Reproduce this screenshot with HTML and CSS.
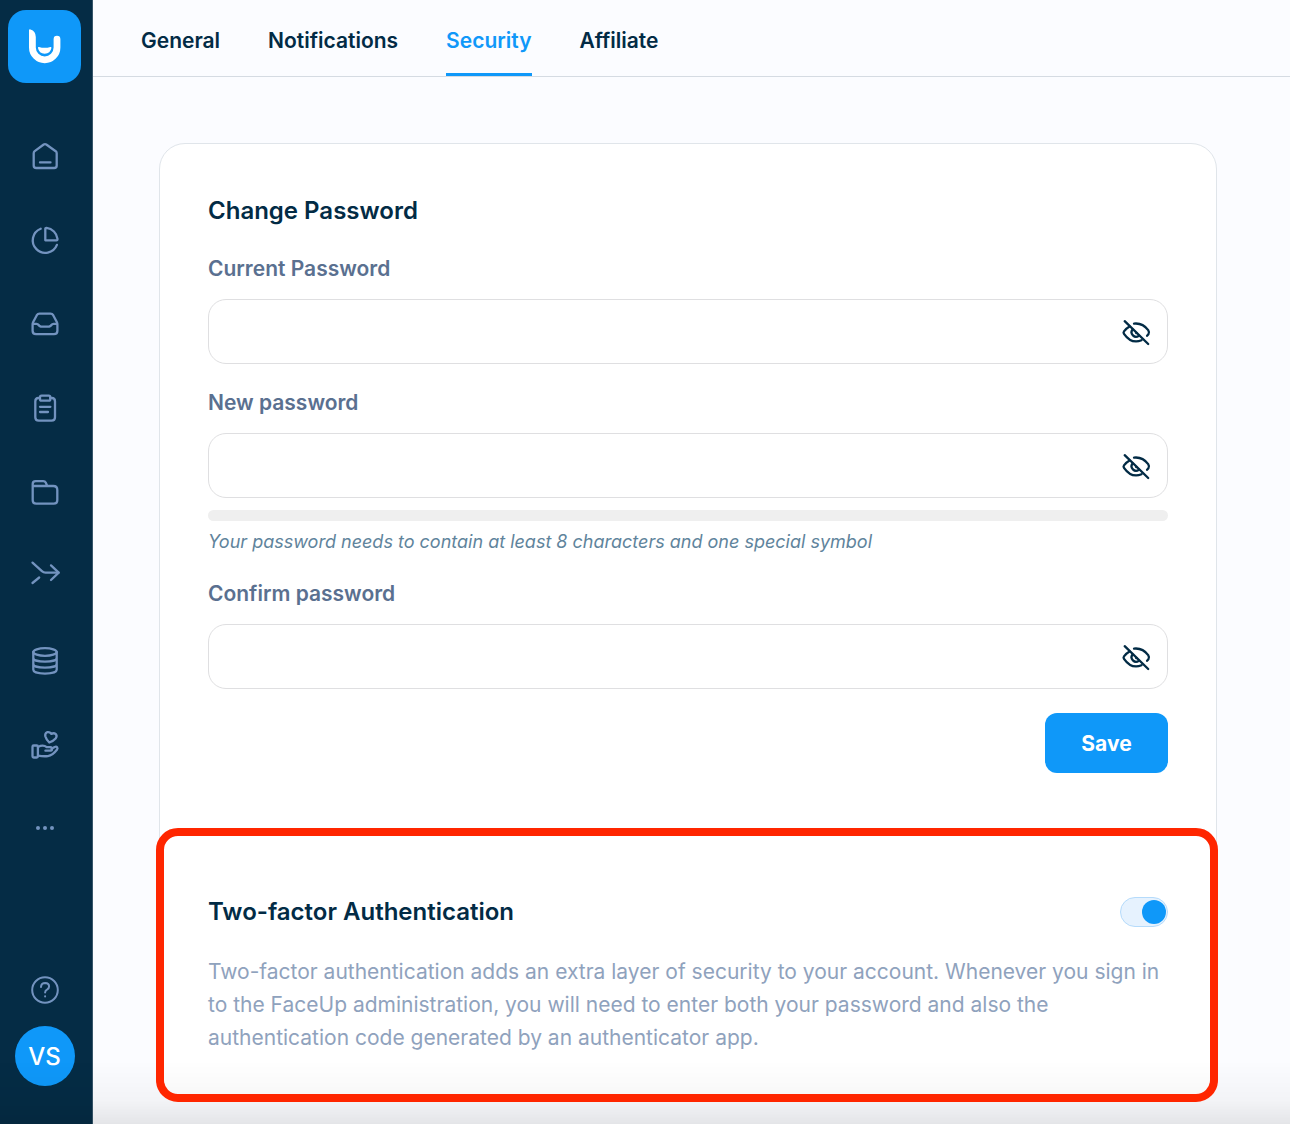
FILE: index.html
```html
<!DOCTYPE html>
<html lang="en">
<head>
    <meta charset="UTF-8">
    <meta name="viewport" content="width=device-width, initial-scale=1.0">
    <title>Settings - Security</title>
    <link rel="stylesheet" href="styles.css">
</head>
<body>
    <!-- Eye icon shared by the password fields -->
    <svg class="sprite" aria-hidden="true">
        <symbol id="eyeOff" viewBox="0 0 32 32">
            <path d="M4.7 5.2 28.2 28"/>
            <path d="M14 7.6c6-.7 10.800 2 14.200 6.500q1.500 2.200.2 4.200l-1.300 1.500"/>
            <path d="M9.500 10.500Q6.400 12.200 4 15.400q-.9 1.200 0 2.400c4.400 6.300 10.800 9.200 17.500 6.500"/>
            <path d="M12.500 13.500a4.500 4.500 0 0 0 6.300 6.300"/>
            <path d="M16.300 16.800v.4"/>
        </symbol>
    </svg>

    <aside class="sidebar">
        <a href="#" class="logo" aria-label="FaceUp">
            <svg viewBox="0 0 73 73">
                <path d="M21 20.500Q21 19 22.500 19.400 27.800 21 27.800 27v10.500a8.900 8.900 0 0 0 17.800 0v-8.300a3.400 3.400 0 0 1 6.800 0v8.300a15.700 15.700 0 0 1-31.400 0z"/>
                <path d="M31 37q5.700 1.700 11.400 0 1.200-.2 1 1a6.800 6.800 0 0 1-13.400 0q-.2-1.200 1-1z"/>
            </svg>
        </a>
        <nav class="side-nav" aria-label="Main">
            <a href="#" aria-label="Home">
                <svg viewBox="0 0 32 32">
                    <path d="M14.700 4.500q1.300-.9 2.600 0l9.400 6.700q1 .8 1 2v12.200q0 2.600-2.600 2.600H7.300q-2.600 0-2.600-2.600V13.200q0-1.200 1-2z"/>
                    <path d="M11 22.400h10.500"/>
                </svg>
            </a>
            <a href="#" aria-label="Reports">
                <svg viewBox="0 0 32 32">
                    <path d="M11.700 4.700a12.500 12.500 0 1 0 16.200 16.200"/>
                    <path d="M16.300 5q0-1.200 1.200-1.100a12.500 12.500 0 0 1 11 11q.1 1.400-1.100 1.400H16.300z"/>
                </svg>
            </a>
            <a href="#" aria-label="Inbox">
                <svg viewBox="0 0 32 32">
                    <path d="M10.500 5.700h11q1.800 0 2.700 1.500l3.600 6.800q.6 1.200.6 2.500v6.200q0 3.400-3.400 3.400H7q-3.400 0-3.400-3.400v-6.200q0-1.300.6-2.500l3.600-6.800q.9-1.500 2.700-1.500z"/>
                    <path d="M4 15.800h3.500q1.300 0 2.100 1.200t2.300 1.700h8.200q1.500-.5 2.300-1.700t2.100-1.200H28"/>
                </svg>
            </a>
            <a href="#" aria-label="Forms">
                <svg viewBox="0 0 32 32">
                    <path d="M11 6h-1.500Q6.300 6 6.300 9.500v15.700q0 3.500 3.500 3.500h12.700q3.500 0 3.500-3.500V9.500Q26 6 22.800 6h-1.500"/>
                    <rect x="11" y="3.700" width="10.300" height="5" rx="1.500"/>
                    <path d="M11 14.800h10.400M11 20h8"/>
                </svg>
            </a>
            <a href="#" aria-label="Files">
                <svg viewBox="0 0 32 32">
                    <path d="M3.700 10h20.600q4 0 4 4v10.200q0 3.500-3.500 3.500H7.200q-3.500 0-3.500-3.500V8q0-2.900 2.900-2.900h7.600q1.800 0 2.500 1.500l1.600 3.400"/>
                </svg>
            </a>
            <a href="#" aria-label="Workflows">
                <svg viewBox="0 0 32 32">
                    <path d="M3.500 2.600l9.400 8.600q1.600 1.500 3.600 1.500h13"/>
                    <path d="M22 5.400l7.700 7.300-7.700 7.300M3.500 23l6.700-5.500"/>
                </svg>
            </a>
            <a href="#" aria-label="Data">
                <svg viewBox="0 0 32 32">
                    <ellipse cx="16" cy="8" rx="11.700" ry="3.800"/>
                    <path d="M4.300 8v17.800c0 5 23.400 5 23.400 0V8M4.300 13.900c0 5 23.400 5 23.400 0M4.300 19.900c0 5 23.400 5 23.400 0"/>
                </svg>
            </a>
            <a href="#" aria-label="Care">
                <svg viewBox="0 0 32 32">
                    <rect x="3.500" y="17.500" width="5.400" height="12" rx="1.200"/>
                    <path d="M9 19q5.200-2.700 8.700.2h3.600q2 .2 1.800 1.800t-2.200 1.700h-4.500M22.500 20.800l3.200-1.900q1.500-.8 2.400.3t-.2 2.500q-4.400 5.700-9 6.400-4.500.5-9.900-.5"/>
                    <path d="M20.300 14.500q-3.300-3.500-4-6.300-.5-3 1.800-4 2.500-.7 4.200 1.700 2.500-1.400 4.500.2 1.700 2-.2 4.400-2 2.400-6.300 4z"/>
                </svg>
            </a>
            <a href="#" aria-label="More">
                <svg class="dots" viewBox="0 0 32 32">
                    <circle cx="9" cy="16" r="2"/>
                    <circle cx="16" cy="16" r="2"/>
                    <circle cx="23" cy="16" r="2"/>
                </svg>
            </a>
        </nav>
        <div class="side-bottom">
            <a href="#" class="help" aria-label="Help">
                <svg viewBox="0 0 32 32">
                    <circle cx="16" cy="16" r="12.800"/>
                    <path d="M12 13q.2-4 4.200-4 3.900.2 3.900 3.500 0 1.700-1.800 2.800-2.200 1.200-2.200 3.200M16.100 22.300v.2"/>
                </svg>
            </a>
            <button class="avatar" type="button">VS</button>
        </div>
    </aside>

    <div class="page">
        <nav class="tabs" aria-label="Settings">
            <a href="#">General</a>
            <a href="#">Notifications</a>
            <a href="#" class="active">Security</a>
            <a href="#">Affiliate</a>
        </nav>

        <main class="content">
            <div class="card">
                <form class="password-form">
                    <h2>Change Password</h2>
                    <div class="field">
                        <label for="currentPassword">Current Password</label>
                        <div class="input-box">
                            <input type="password" id="currentPassword">
                            <button type="button" class="eye-button" aria-label="Show password"><svg><use href="#eyeOff"/></svg></button>
                        </div>
                    </div>
                    <div class="field">
                        <label for="newPassword">New password</label>
                        <div class="input-box">
                            <input type="password" id="newPassword">
                            <button type="button" class="eye-button" aria-label="Show password"><svg><use href="#eyeOff"/></svg></button>
                        </div>
                        <div class="strength"></div>
                        <p class="hint">Your password needs to contain at least 8 characters and one special symbol</p>
                    </div>
                    <div class="field">
                        <label for="confirmPassword">Confirm password</label>
                        <div class="input-box">
                            <input type="password" id="confirmPassword">
                            <button type="button" class="eye-button" aria-label="Show password"><svg><use href="#eyeOff"/></svg></button>
                        </div>
                    </div>
                    <button type="button" class="save-button">Save</button>
                </form>

                <section class="two-factor">
                    <div class="two-factor-head">
                        <h2><label for="twoFactor">Two-factor Authentication</label></h2>
                        <input type="checkbox" class="toggle" id="twoFactor" checked>
                    </div>
                    <p>Two-factor authentication adds an extra layer of security to your account. Whenever you sign in to the FaceUp administration, you will need to enter both your password and also the authentication code generated by an authenticator app.</p>
                </section>
            </div>
        </main>
    </div>
    <script>
        document.querySelectorAll('.eye-button').forEach((button) => {
            button.addEventListener('click', () => {
                const input = button.previousElementSibling;
                input.type = input.type === 'password' ? 'text' : 'password';
            });
        });
    </script>
</body>
</html>
```
FILE: styles.css
```css
* {
    box-sizing: border-box;
}
body {
    display: flex;
    min-height: 100vh;
    margin: 0;
    background-color: #fbfcff;
    color: #022b45;
    font-family: Inter, sans-serif;
    font-size: 21px;
}
/* soft shade along the bottom edge */
body::after {
    content: "";
    position: fixed;
    inset: auto 0 0 0;
    height: 64px;
    background: linear-gradient(to top, rgba(0, 0, 0, 0.09), rgba(0, 0, 0, 0.03) 24px, transparent);
    pointer-events: none;
}
h2,
p {
    margin: 0;
}
h2 {
    font-size: 24px;
    font-weight: 600;
    line-height: 38px;
}
a {
    color: inherit;
    text-decoration: none;
}
button {
    border: none;
    padding: 0;
    font-family: inherit;
    cursor: pointer;
}
svg {
    display: block;
    fill: none;
    stroke: currentColor;
    stroke-width: 2.3;
    stroke-linecap: round;
    stroke-linejoin: round;
}
.sprite {
    position: absolute;
    width: 0;
    height: 0;
}

/* Sidebar */
.sidebar {
    display: flex;
    flex-direction: column;
    align-items: center;
    flex: none;
    width: 93px;
    padding: 10px 11px 38px 8px;
    border-right: 1px solid #37566a;
    background-color: #052c45;
    color: #7393bf;
}
.logo {
    width: 73px;
    height: 73px;
    border-radius: 18px;
    background-color: #0f98f9;
}
.logo svg {
    fill: #fff;
    stroke: none;
}
.side-nav {
    display: flex;
    flex-direction: column;
    gap: 52px;
    margin-top: 57px;
}
.side-nav svg,
.help svg {
    width: 32px;
    height: 32px;
}
.help svg {
    stroke-width: 2;
}
.side-nav .dots {
    fill: currentColor;
    stroke: none;
}
.side-bottom {
    display: flex;
    flex-direction: column;
    align-items: center;
    gap: 20px;
    margin-top: auto;
}
.avatar {
    width: 60px;
    height: 60px;
    border-radius: 50%;
    background-color: #0f98f9;
    color: #fff;
    font-size: 24px;
    font-weight: 500;
}

/* Tabs */
.page {
    flex: 1;
    min-width: 0;
}
.tabs {
    display: flex;
    gap: 48px;
    padding: 0 48px;
    border-bottom: 1px solid #d5dbe2;
    font-weight: 600;
}
.tabs a {
    padding: 26px 0 17px;
    border-bottom: 3px solid transparent;
    line-height: 30px;
}
.tabs .active {
    border-bottom-color: #0f98f9;
    color: #0f98f9;
}

/* Card */
.content {
    padding: 66px 73px 20px 66px;
}
.card {
    border: 1px solid #e0e5ea;
    border-radius: 26px;
    background-color: #fff;
}
.password-form {
    display: flex;
    flex-direction: column;
    gap: 24px;
    padding: 48px 48px 56px;
}
.field label {
    display: block;
    margin-bottom: 15px;
    color: #5a7090;
    font-weight: 600;
    line-height: 30px;
}
.input-box {
    display: flex;
    align-items: center;
    height: 65px;
    padding: 0 15px;
    border: 1px solid #dfdfe1;
    border-radius: 18px;
}
.input-box input {
    flex: 1;
    min-width: 0;
    border: none;
    outline: none;
    background: none;
    font: inherit;
}
.eye-button {
    background: none;
    color: #022b45;
}
.eye-button svg {
    width: 32px;
    height: 32px;
}
.strength {
    height: 11px;
    margin-top: 12px;
    border-radius: 6px;
    background-color: #efefef;
}
.hint {
    margin-top: 8px;
    color: #5f849c;
    font-size: 18px;
    font-style: italic;
    line-height: 26px;
}
.save-button {
    align-self: flex-end;
    width: 123px;
    height: 60px;
    border-radius: 12px;
    background-color: #0f98f9;
    color: #fff;
    font-size: 21px;
    font-weight: 700;
}

/* Two-factor */
.two-factor {
    position: relative;
    padding: 64px 48px 44px;
}
.two-factor::after {
    content: "";
    position: absolute;
    z-index: 1;
    inset: -1px -2px -4px -4px;
    border: 8px solid #ff2600;
    border-radius: 22px;
    pointer-events: none;
}
.two-factor-head {
    display: flex;
    align-items: center;
    justify-content: space-between;
    margin-bottom: 24px;
}
.two-factor p {
    color: #8fa2bd;
    line-height: 33px;
}
.toggle {
    appearance: none;
    display: flex;
    align-items: center;
    width: 48px;
    height: 30px;
    margin: 0;
    padding: 0 1px;
    border: 1px solid #b5dbfb;
    border-radius: 15px;
    background-color: #e6f2fe;
    cursor: pointer;
}
.toggle::before {
    content: "";
    width: 24px;
    height: 24px;
    border-radius: 50%;
    background-color: #0f98f9;
}
.toggle:checked {
    justify-content: flex-end;
}
```
